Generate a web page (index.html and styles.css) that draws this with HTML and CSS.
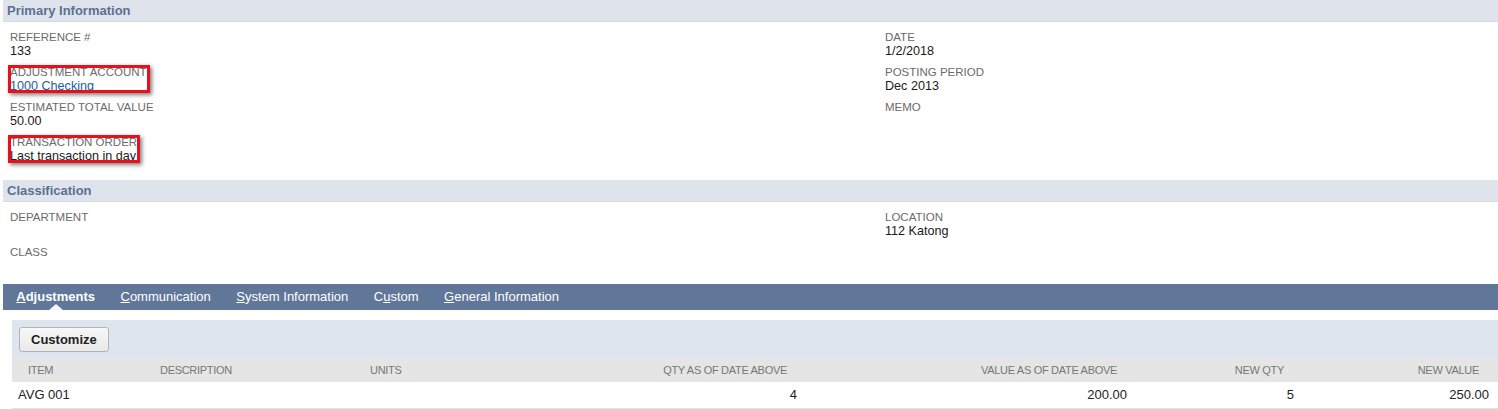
FILE: index.html
```html
<!DOCTYPE html>
<html lang="en">
<head>
<meta charset="UTF-8">
<title>Inventory Adjustment</title>
<link rel="stylesheet" href="styles.css">
</head>
<body>
<div class="page">
  <div class="section-head">Primary Information</div>
  <div class="fields">
    <div class="col">
      <div class="field"><div class="label">Reference #</div><div class="value">133</div></div>
      <div class="field marked"><div class="label">Adjustment Account</div><div class="value"><a href="#">1000 Checking</a></div></div>
      <div class="field"><div class="label">Estimated Total Value</div><div class="value">50.00</div></div>
      <div class="field marked"><div class="label">Transaction Order</div><div class="value">Last transaction in day</div></div>
    </div>
    <div class="col">
      <div class="field"><div class="label">Date</div><div class="value">1/2/2018</div></div>
      <div class="field"><div class="label">Posting Period</div><div class="value">Dec 2013</div></div>
      <div class="field"><div class="label">Memo</div><div class="value"></div></div>
    </div>
  </div>

  <div class="section-head">Classification</div>
  <div class="fields fields-short">
    <div class="col">
      <div class="field"><div class="label">Department</div><div class="value"></div></div>
      <div class="field"><div class="label">Class</div><div class="value"></div></div>
    </div>
    <div class="col">
      <div class="field"><div class="label">Location</div><div class="value">112 Katong</div></div>
    </div>
  </div>

  <div class="tabs">
    <span class="tab active"><u>A</u>djustments</span>
    <span class="tab"><u>C</u>ommunication</span>
    <span class="tab"><u>S</u>ystem Information</span>
    <span class="tab">C<u>u</u>stom</span>
    <span class="tab"><u>G</u>eneral Information</span>
  </div>

  <div class="tab-body">
    <div class="toolbar">
      <button class="btn">Customize</button>
    </div>
    <table class="grid">
      <colgroup>
        <col style="width:132px">
        <col style="width:210px">
        <col style="width:126px">
        <col style="width:323px">
        <col style="width:330px">
        <col style="width:167px">
        <col>
      </colgroup>
      <thead>
        <tr>
          <th>Item</th>
          <th>Description</th>
          <th>Units</th>
          <th class="num">Qty as of Date Above</th>
          <th class="num">Value as of Date Above</th>
          <th class="num">New Qty</th>
          <th class="num">New Value</th>
        </tr>
      </thead>
      <tbody>
        <tr>
          <td>AVG 001</td>
          <td></td>
          <td></td>
          <td class="num">4</td>
          <td class="num">200.00</td>
          <td class="num">5</td>
          <td class="num">250.00</td>
        </tr>
      </tbody>
    </table>
  </div>
</div>
</body>
</html>
```

FILE: styles.css
```css
* {
  box-sizing: border-box;
}
body {
  margin: 0;
  font-family: "Liberation Sans", Arial, sans-serif;
  font-size: 13px;
  color: #222;
  background: #fff;
}
.page {
  margin-left: 3px;
}
.section-head {
  height: 22px;
  line-height: 21px;
  padding-left: 4px;
  background: #dfe4ec;
  border-bottom: 1px solid #d3d9e3;
  color: #5b7092;
  font-weight: bold;
  font-size: 13px;
}
.fields {
  display: grid;
  grid-template-columns: 875px 1fr;
  padding: 8px 7px 10px;
}
.fields-short {
  padding-bottom: 4px;
}
.field {
  position: relative;
  width: fit-content;
  margin-bottom: 7px;
}
.label {
  line-height: 14px;
  font-size: 11.5px;
  color: #6b6b6b;
  text-transform: uppercase;
}
.value {
  min-height: 14px;
  line-height: 14px;
  font-size: 12.6px;
  color: #1a1a1a;
}
.value a {
  color: #255b9e;
  text-decoration: none;
}
/* red annotation boxes */
.field.marked::after {
  content: "";
  position: absolute;
  top: 0;
  bottom: 0;
  left: -2px;
  right: -3px;
  border: 3px solid #e8101a;
  box-shadow: 2px 2px 4px rgba(0, 0, 0, 0.5);
}
.tabs {
  display: flex;
  height: 26px;
  padding-left: 0.5px;
  background: #607799;
}
.tab {
  position: relative;
  padding: 0 12.75px;
  line-height: 26px;
  color: #fff;
  font-size: 13px;
  white-space: nowrap;
}
.tab.active {
  font-weight: bold;
}
.tab.active::after {
  content: "";
  position: absolute;
  left: 50%;
  bottom: 0;
  margin-left: -7px;
  border-left: 7px solid transparent;
  border-right: 7px solid transparent;
  border-bottom: 6px solid #f2f5f9;
}
.tab-body {
  margin: 10px 0 0 9px;
}
.toolbar {
  height: 38px;
  padding: 7px 7px 0;
  background: #dfe5ee;
}
.btn {
  height: 25px;
  padding: 0 11px;
  font-family: inherit;
  font-size: 13px;
  font-weight: bold;
  color: #222;
  background: linear-gradient(#f7f7f7, #e9e9e9);
  border: 1px solid #b4b4b4;
  border-radius: 3px;
}
.grid {
  width: 100%;
  border-collapse: collapse;
  table-layout: fixed;
}
.grid th {
  height: 24px;
  padding: 0 16px;
  background: #e5e5e5;
  color: #777;
  font-size: 11px;
  font-weight: normal;
  text-align: left;
  text-transform: uppercase;
  letter-spacing: -0.3px;
  white-space: nowrap;
}
.grid td {
  height: 26px;
  padding: 0 6px;
  border-bottom: 1px solid #e3e3e3;
  font-size: 13px;
  color: #222;
}
.grid .num {
  text-align: right;
}
.grid th:last-child {
  padding-right: 19px;
}
.grid td:last-child {
  padding-right: 9px;
}
```
